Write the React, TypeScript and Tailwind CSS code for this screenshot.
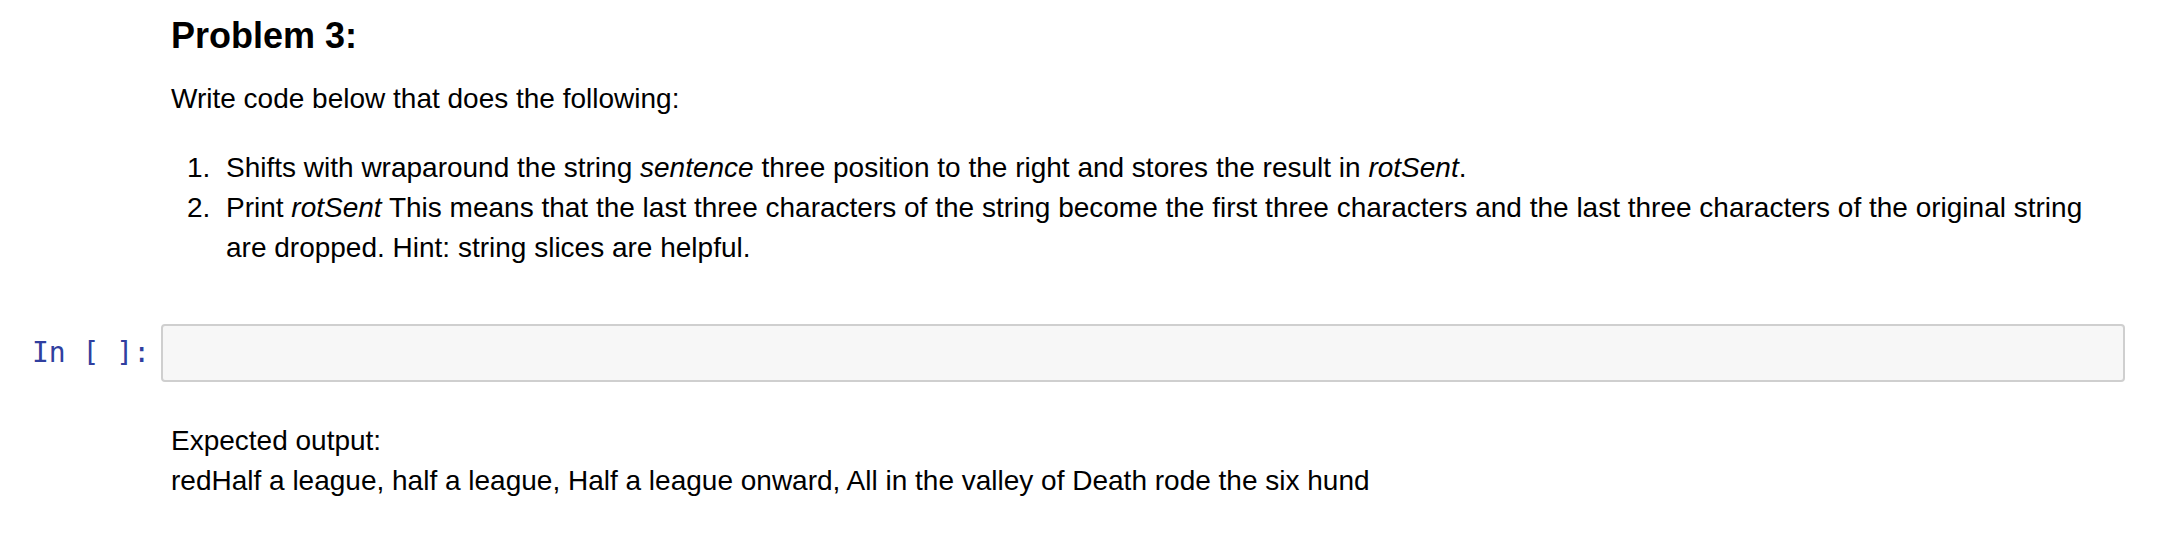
export default function App() {
  const sans = "font-['Liberation_Sans','Helvetica_Neue',Arial,sans-serif]";

  return (
    <div className={`w-[2162px] h-[556px] bg-white text-black ${sans} pt-[14px]`}>
      {/* markdown cell */}
      <div className="flex">
        <div className="w-[161px] shrink-0" />
        <div className="w-[1964px] pl-[10px]">
          <h3 className="text-[36px] font-bold leading-[43px]">Problem 3:</h3>
          <p className="mt-[22px] text-[28px] leading-[40px]">Write code below that does the following:</p>
          <ol className="mt-[29px] text-[28px] leading-[40px]">
            <li className="flex">
              <span className="w-[55px] shrink-0 pl-[16px]">1.</span>
              <span>
                Shifts with wraparound the string <em>sentence</em> three position to the right and stores the result
                in <em>rotSent</em>.
              </span>
            </li>
            <li className="flex">
              <span className="w-[55px] shrink-0 pl-[16px]">2.</span>
              <span>
                Print <em>rotSent</em> This means that the last three characters of the string become the first three
                characters and the last three characters of the original string
                <br />
                are dropped. Hint: string slices are helpful.
              </span>
            </li>
          </ol>
        </div>
      </div>

      {/* code cell */}
      <div className="flex items-center mt-[56px]">
        <div className="w-[161px] shrink-0 pr-[11px] text-right font-['DejaVu_Sans_Mono',monospace] text-[28px] leading-[40px] text-[#303F9F] whitespace-pre">
          In [ ]:
        </div>
        <div className="w-[1964px] h-[58px] bg-[#f7f7f7] border-2 border-[#cfcfcf] rounded-[4px]" />
      </div>

      {/* markdown cell */}
      <div className="flex mt-[39px]">
        <div className="w-[161px] shrink-0" />
        <div className="pl-[10px] text-[28px] leading-[40px]">
          Expected output:
          <br />
          redHalf a league, half a league, Half a league onward, All in the valley of Death rode the six hund
        </div>
      </div>
    </div>
  );
}
